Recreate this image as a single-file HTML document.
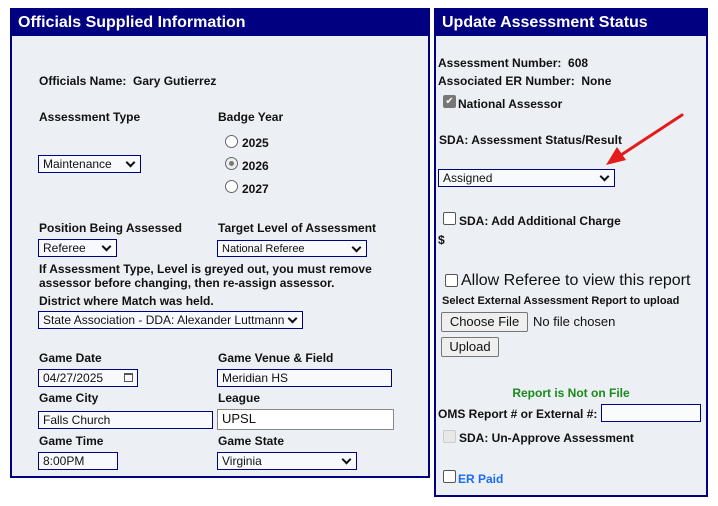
<!DOCTYPE html>
<html><head><style>
body{margin:0;width:718px;height:506px;background:#fff;font-family:"Liberation Sans",Arial,sans-serif;position:relative;overflow:hidden;color:#111}
.a{position:absolute;white-space:nowrap}
.b{font-weight:bold;font-size:12px}
.panel{position:absolute;background:#eceff4;border:2px solid #000080;box-sizing:border-box}
.hd{position:absolute;left:0;top:0;right:0;height:26px;background:#000080;color:#fff;font-weight:bold;font-size:16px;padding:4px 0 0 6px;box-sizing:border-box}
.sel,.inp{position:absolute;box-sizing:border-box;border:1px solid #000080;background:#f8f9fc;font-size:12px;padding:1px 4px;line-height:14px}
.sel:after{content:"";position:absolute;right:6px;top:3px;width:5px;height:5px;border-right:2px solid #111;border-bottom:2px solid #111;transform:rotate(45deg)}
.rad{position:absolute;width:11px;height:11px;border:1px solid #666;border-radius:50%;background:#fff}
.cb{position:absolute;width:11px;height:11px;border:1px solid #555;border-radius:2px;background:#fff}
.btn{position:absolute;box-sizing:border-box;border:1px solid #767676;border-radius:2px;background:#efefef;font-size:13px;text-align:center;line-height:17px}
</style></head><body>
<div class="panel" style="left:10px;top:8px;width:420px;height:470px"><div class="hd">Officials Supplied Information</div></div>
<div class="a b" style="left:39px;top:74px">Officials Name:&nbsp; <span style="font-weight:bold">Gary Gutierrez</span></div>
<div class="a b" style="left:39px;top:110px">Assessment Type</div>
<div class="a b" style="left:218px;top:110px">Badge Year</div>
<div class="rad" style="left:225px;top:135px"></div><div class="a b" style="left:242px;top:136px">2025</div>
<div class="rad" style="left:225px;top:157px;background:#eee"><div style="position:absolute;left:3px;top:3px;width:5px;height:5px;border-radius:50%;background:#777"></div></div><div class="a b" style="left:242px;top:159px">2026</div>
<div class="rad" style="left:225px;top:180px"></div><div class="a b" style="left:242px;top:182px">2027</div>
<div class="sel" style="left:38px;top:155px;width:103px;height:18px">Maintenance</div>
<div class="a b" style="left:39px;top:221px">Position Being Assessed</div>
<div class="a b" style="left:218px;top:221px">Target Level of Assessment</div>
<div class="sel" style="left:38px;top:239px;width:79px;height:18px">Referee</div>
<div class="sel" style="left:217px;top:240px;width:150px;height:17px;font-size:11px">National Referee</div>
<div class="a b" style="left:39px;top:262px">If Assessment Type, Level is greyed out, you must remove</div>
<div class="a b" style="left:39px;top:276px">assessor before changing, then re-assign assessor.</div>
<div class="a b" style="left:39px;top:294px">District where Match was held.</div>
<div class="sel" style="left:38px;top:311px;width:265px;height:18px">State Association - DDA: Alexander Luttmann</div>
<div class="a b" style="left:39px;top:351px">Game Date</div>
<div class="a b" style="left:218px;top:351px">Game Venue &amp; Field</div>
<div class="inp" style="left:38px;top:369px;width:100px;height:18px">04/27/2025<span style="position:absolute;right:4px;top:3px;width:9px;height:9px;border:1px solid #555;border-top-width:2px;box-sizing:border-box"></span></div>
<div class="inp" style="left:217px;top:369px;width:175px;height:18px">Meridian HS</div>
<div class="a b" style="left:39px;top:391px">Game City</div>
<div class="a b" style="left:218px;top:391px">League</div>
<div class="inp" style="left:38px;top:411px;width:175px;height:18px">Falls Church</div>
<div class="inp" style="left:217px;top:409px;width:177px;height:21px;border-color:#888;background:#fff;font-size:13px;padding-top:2px">UPSL</div>
<div class="a b" style="left:39px;top:434px">Game Time</div>
<div class="a b" style="left:218px;top:434px">Game State</div>
<div class="inp" style="left:38px;top:452px;width:80px;height:18px">8:00PM</div>
<div class="sel" style="left:217px;top:452px;width:140px;height:18px">Virginia</div>

<div class="panel" style="left:434px;top:8px;width:274px;height:489px"><div class="hd">Update Assessment Status</div></div>
<div class="a b" style="left:438px;top:56px">Assessment Number:&nbsp; 608</div>
<div class="a b" style="left:438px;top:74px">Associated ER Number:&nbsp; None</div>
<div class="cb" style="left:443px;top:95px;background:#777;border-color:#777;color:#fff;font-size:10px;line-height:11px;text-align:center">✔</div>
<div class="a b" style="left:458px;top:97px">National Assessor</div>
<div class="a b" style="left:439px;top:133px">SDA: Assessment Status/Result</div>
<div class="sel" style="left:438px;top:169px;width:177px;height:18px">Assigned</div>
<div class="cb" style="left:443px;top:212px"></div><div class="a b" style="left:459px;top:214px">SDA: Add Additional Charge</div>
<div class="a b" style="left:438px;top:233px">$</div>
<div class="cb" style="left:445px;top:274px"></div><div class="a" style="left:461px;top:272px;font-size:16px">Allow Referee to view this report</div>
<div class="a" style="left:442px;top:295px;font-size:11px;font-weight:bold">Select External Assessment Report to upload</div>
<div class="btn" style="left:441px;top:312px;width:87px;height:20px">Choose File</div>
<div class="a" style="left:533px;top:314px;font-size:13px">No file chosen</div>
<div class="btn" style="left:441px;top:337px;width:58px;height:20px">Upload</div>
<div class="a b" style="left:434px;width:274px;text-align:center;top:386px;color:#1a8a1a">Report is Not on File</div>
<div class="a b" style="left:438px;top:407px">OMS Report # or External #:</div>
<div class="inp" style="left:601px;top:404px;width:100px;height:18px;background:#fafbfd"></div>
<div class="cb" style="left:443px;top:430px;border-color:#ccc;background:#e8e8e8"></div><div class="a b" style="left:459px;top:431px">SDA: Un-Approve Assessment</div>
<div class="cb" style="left:443px;top:470px"></div><div class="a b" style="left:458px;top:472px;color:#1a6cf0">ER Paid</div>

<svg class="a" style="left:0;top:0" width="718" height="506"><line x1="682" y1="115" x2="618" y2="157" stroke="#e31b1b" stroke-width="3" stroke-linecap="round"/><polygon points="606,165 617,147 626,160" fill="#e31b1b"/></svg>
</body></html>
